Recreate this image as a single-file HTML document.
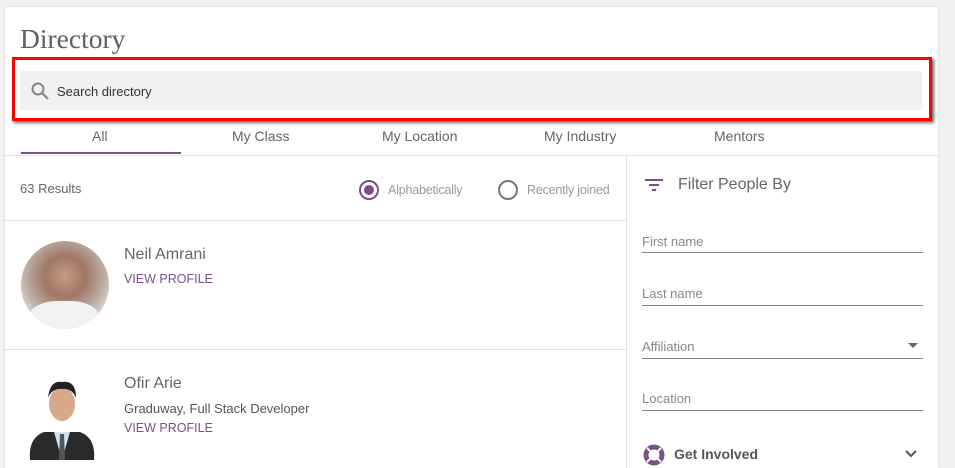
<!DOCTYPE html>
<html><head><meta charset="utf-8"><style>
*{margin:0;padding:0;box-sizing:border-box}
html,body{width:955px;height:468px;overflow:hidden}
body{background:#f1f1f1;font-family:"Liberation Sans",sans-serif;position:relative}
.card{position:absolute;left:5px;top:7px;width:933px;height:461px;background:#fff;box-shadow:0 0 2px rgba(0,0,0,.15)}
.a{position:absolute}
.t{color:#666}
</style></head><body>
<div class="card"></div>
<div class="a" style="left:20px;top:23px;font-family:'Liberation Serif',serif;font-size:27.5px;color:#606060">Directory</div>
<div class="a" style="left:12px;top:57px;width:920px;height:64px;border:3px solid #f00;box-shadow:2px 2px 3px rgba(0,0,0,.6)"></div>
<div class="a" style="left:20px;top:71px;width:902px;height:39px;background:#f2f1ef"></div>
<svg class="a" style="left:30px;top:81px" width="20" height="20" viewBox="0 0 20 20"><circle cx="8" cy="8" r="5.5" fill="none" stroke="#888" stroke-width="2"/><line x1="12" y1="12" x2="18" y2="18" stroke="#888" stroke-width="2.2"/></svg>
<div class="a" style="left:57px;top:84px;font-size:13px;color:#333">Search directory</div>
<div class="a t" style="left:92px;top:128px;font-size:14px">All</div>
<div class="a t" style="left:232px;top:128px;font-size:14px">My Class</div>
<div class="a t" style="left:382px;top:128px;font-size:14px">My Location</div>
<div class="a t" style="left:544px;top:128px;font-size:14px">My Industry</div>
<div class="a t" style="left:714px;top:128px;font-size:14px">Mentors</div>
<div class="a" style="left:21px;top:152px;width:160px;height:2px;background:#7a4f8a"></div>
<div class="a" style="left:5px;top:155px;width:933px;height:1px;background:#e0e0e0"></div>
<div class="a" style="left:626px;top:156px;width:1px;height:312px;background:#e0e0e0"></div>
<div class="a t" style="left:20px;top:181px;font-size:13px">63 Results</div>
<div class="a" style="left:359px;top:180px;width:20px;height:20px;border:2px solid #7a4f8a;border-radius:50%"></div>
<div class="a" style="left:364px;top:185px;width:10px;height:10px;background:#7a4f8a;border-radius:50%"></div>
<div class="a" style="left:388px;top:183px;font-size:12.5px;color:#999;letter-spacing:-0.2px">Alphabetically</div>
<div class="a" style="left:498px;top:180px;width:20px;height:20px;border:2px solid #777;border-radius:50%"></div>
<div class="a" style="left:527px;top:183px;font-size:12.5px;color:#999;letter-spacing:-0.2px">Recently joined</div>
<div class="a" style="left:5px;top:220px;width:621px;height:1px;background:#e0e0e0"></div>
<div class="a" style="left:21px;top:241px;width:88px;height:88px;border-radius:50%;background:radial-gradient(circle at 50% 40%,#c89a80 0,#a07866 30%,#b9a89e 55%,#e8e4e0 80%);overflow:hidden"><div style="position:absolute;left:8px;top:60px;width:70px;height:40px;background:#f2f2f2;border-radius:40% 40% 0 0"></div></div>
<div class="a t" style="left:124px;top:246px;font-size:16px">Neil Amrani</div>
<div class="a" style="left:124px;top:272px;font-size:12.5px;color:#7a4f8a">VIEW PROFILE</div>
<div class="a" style="left:5px;top:349px;width:621px;height:1px;background:#e0e0e0"></div>
<svg class="a" style="left:26px;top:374px" width="72" height="86" viewBox="0 0 72 86"><path d="M4 86 Q2 64 18 58 L54 58 Q70 64 68 86Z" fill="#2a2a2a"/><path d="M28 58 L36 86 L44 58Z" fill="#cfe0f0"/><path d="M34 60 L38 60 L39 86 L33 86Z" fill="#555"/><ellipse cx="36" cy="30" rx="13" ry="17" fill="#d7a88a"/><path d="M22 24 Q24 6 36 8 Q50 6 50 24 Q46 14 36 15 Q26 14 22 24Z" fill="#222"/></svg>
<div class="a t" style="left:124px;top:375px;font-size:16px">Ofir Arie</div>
<div class="a t" style="left:124px;top:401px;font-size:13px;color:#555">Graduway, Full Stack Developer</div>
<div class="a" style="left:124px;top:421px;font-size:12.5px;color:#7a4f8a">VIEW PROFILE</div>
<svg class="a" style="left:645px;top:178px" width="18" height="14" viewBox="0 0 18 14"><rect x="0" y="1" width="18" height="2" fill="#7a4f8a"/><rect x="4" y="6" width="10" height="2" fill="#7a4f8a"/><rect x="7" y="11" width="4" height="2" fill="#7a4f8a"/></svg>
<div class="a t" style="left:678px;top:176px;font-size:16px">Filter People By</div>
<div class="a" style="left:642px;top:234px;font-size:13px;color:#888">First name</div>
<div class="a" style="left:642px;top:252px;width:281px;height:1px;background:#888"></div>
<div class="a" style="left:642px;top:286px;font-size:13px;color:#888">Last name</div>
<div class="a" style="left:642px;top:305px;width:281px;height:1px;background:#888"></div>
<div class="a" style="left:642px;top:339px;font-size:13px;color:#888">Affiliation</div>
<div class="a" style="left:908px;top:343px;width:0;height:0;border-left:5px solid transparent;border-right:5px solid transparent;border-top:5px solid #666"></div>
<div class="a" style="left:642px;top:358px;width:281px;height:1px;background:#888"></div>
<div class="a" style="left:642px;top:391px;font-size:13px;color:#888">Location</div>
<div class="a" style="left:642px;top:410px;width:281px;height:1px;background:#888"></div>
<svg class="a" style="left:643px;top:444px" width="22" height="22" viewBox="0 0 22 22"><circle cx="11" cy="11" r="8" fill="none" stroke="#7a4f8a" stroke-width="5"/><g stroke="#fff" stroke-width="2"><line x1="4" y1="4" x2="8" y2="8"/><line x1="18" y1="4" x2="14" y2="8"/><line x1="4" y1="18" x2="8" y2="14"/><line x1="18" y1="18" x2="14" y2="14"/></g></svg>
<div class="a" style="left:674px;top:446px;font-size:14px;font-weight:bold;color:#555">Get Involved</div>
<svg class="a" style="left:904px;top:449px" width="14" height="10" viewBox="0 0 14 10"><path d="M2 2 L7 7 L12 2" fill="none" stroke="#555" stroke-width="2"/></svg>
</body></html>
